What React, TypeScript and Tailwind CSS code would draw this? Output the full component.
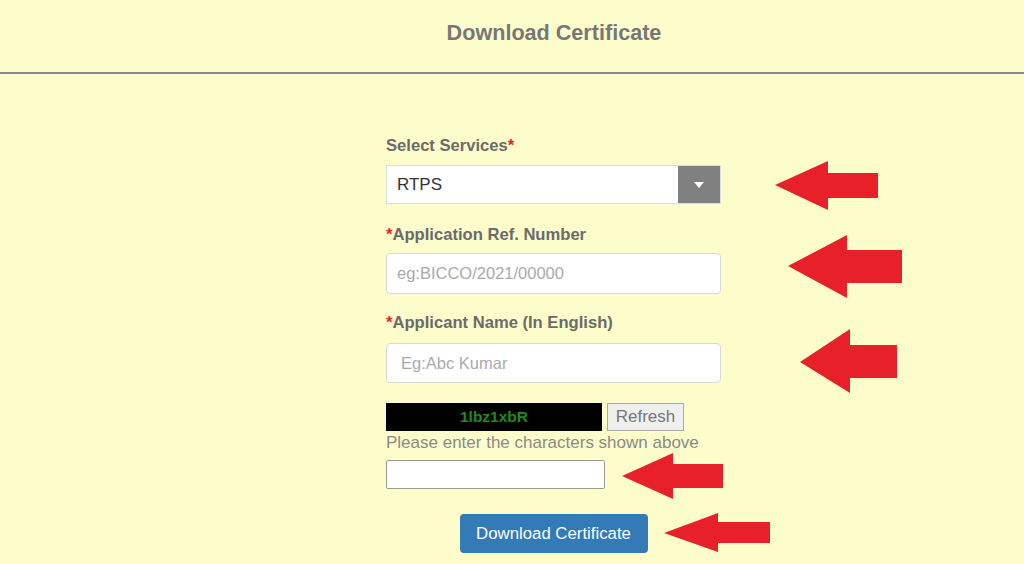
import { ChevronDown } from 'lucide-react'

// red annotation arrows laid over the form: tip, head back x, head top/bottom, shaft top/bottom, shaft end
const ARROWS = [
  { tip: [775, 185], hx: 828, ht: 161, hb: 210, st: 173, sb: 198, ex: 878 },
  { tip: [788, 266], hx: 847, ht: 235, hb: 298, st: 250, sb: 283, ex: 902 },
  { tip: [800, 362], hx: 850, ht: 329, hb: 393, st: 345, sb: 378, ex: 897 },
  { tip: [622, 476], hx: 673, ht: 453, hb: 499, st: 464, sb: 488, ex: 723 },
  { tip: [664, 533], hx: 718, ht: 513, hb: 552, st: 522, sb: 543, ex: 770 },
]

function Arrows() {
  return (
    <svg className="absolute inset-0 pointer-events-none" width="1024" height="564" viewBox="0 0 1024 564">
      {ARROWS.map((a, i) => (
        <polygon
          key={i}
          fill="#e8202a"
          points={`${a.tip[0]},${a.tip[1]} ${a.hx},${a.ht} ${a.hx},${a.st} ${a.ex},${a.st} ${a.ex},${a.sb} ${a.hx},${a.sb} ${a.hx},${a.hb}`}
        />
      ))}
    </svg>
  )
}

function Label({ children, pre }: { children: React.ReactNode; pre?: boolean }) {
  return (
    <div className="text-[16.6px] leading-[20px] font-bold text-[#6b6b6b]">
      {pre && <span className="text-[#e0262b]">*</span>}
      {children}
      {!pre && <span className="text-[#e0262b]">*</span>}
    </div>
  )
}

export default function App() {
  return (
    <div
      className="relative w-[1024px] h-[564px] overflow-hidden bg-[#fdfdcb] text-[#333]"
      style={{ fontFamily: '"Liberation Sans", Arial, sans-serif' }}
    >
      <div className="h-[72px] pl-[84px] flex items-center justify-center">
        <h1 className="text-[21.6px] font-bold text-[#777] pb-[6px]">Download Certificate</h1>
      </div>
      <div className="h-[2px] bg-[#8a8a8a]" />

      <div className="pl-[83px]">
        <div className="w-[335px] mx-auto pt-[62px] flex flex-col">
          <Label>Select Services</Label>
          <div className="mt-[9px] h-[39px] flex bg-white border border-[#ddd]">
            <div className="flex-1 flex items-center pl-[10px] text-[17px] text-[#333]">RTPS</div>
            <div className="w-[42px] bg-[#808080] flex items-center justify-center">
              <svg width="10" height="6" viewBox="0 0 10 6"><polygon points="0,0 10,0 5,6" fill="#fff" /></svg>
            </div>
          </div>

          <div className="mt-[21px]"><Label pre>Application Ref. Number</Label></div>
          <input
            placeholder="eg:BICCO/2021/00000"
            className="mt-[8px] h-[41px] px-[10px] text-[16.5px] bg-white border border-[#d8d8d8] rounded-[4px] placeholder:text-[#aaa] outline-none"
          />

          <div className="mt-[19px]"><Label pre>Applicant Name (In English)</Label></div>
          <input
            placeholder="Eg:Abc Kumar"
            className="mt-[10px] h-[40px] px-[14px] text-[16.5px] bg-white border border-[#d8d8d8] rounded-[4px] placeholder:text-[#aaa] outline-none"
          />

          <div className="mt-[20px] flex items-center gap-[5px]">
            <div className="w-[216px] h-[28px] bg-black flex items-center justify-center text-[15.5px] font-bold text-[#1f8a1f]">
              1lbz1xbR
            </div>
            <button className="w-[77px] h-[28px] bg-[#efefef] border border-[#aaa] text-[17px] text-[#777]">
              Refresh
            </button>
          </div>
          <div className="mt-[2px] text-[17px] leading-[20px] text-[#8a8a8a] whitespace-nowrap">Please enter the characters shown above</div>
          <input className="mt-[7px] w-[219px] h-[29px] bg-white border border-[#999] rounded-[2px] outline-none" />

          <button className="mt-[25px] self-center w-[188px] h-[39px] rounded-[4px] bg-[#337ab7] text-white text-[16.8px]">
            Download Certificate
          </button>
        </div>
      </div>

      <Arrows />
    </div>
  )
}
